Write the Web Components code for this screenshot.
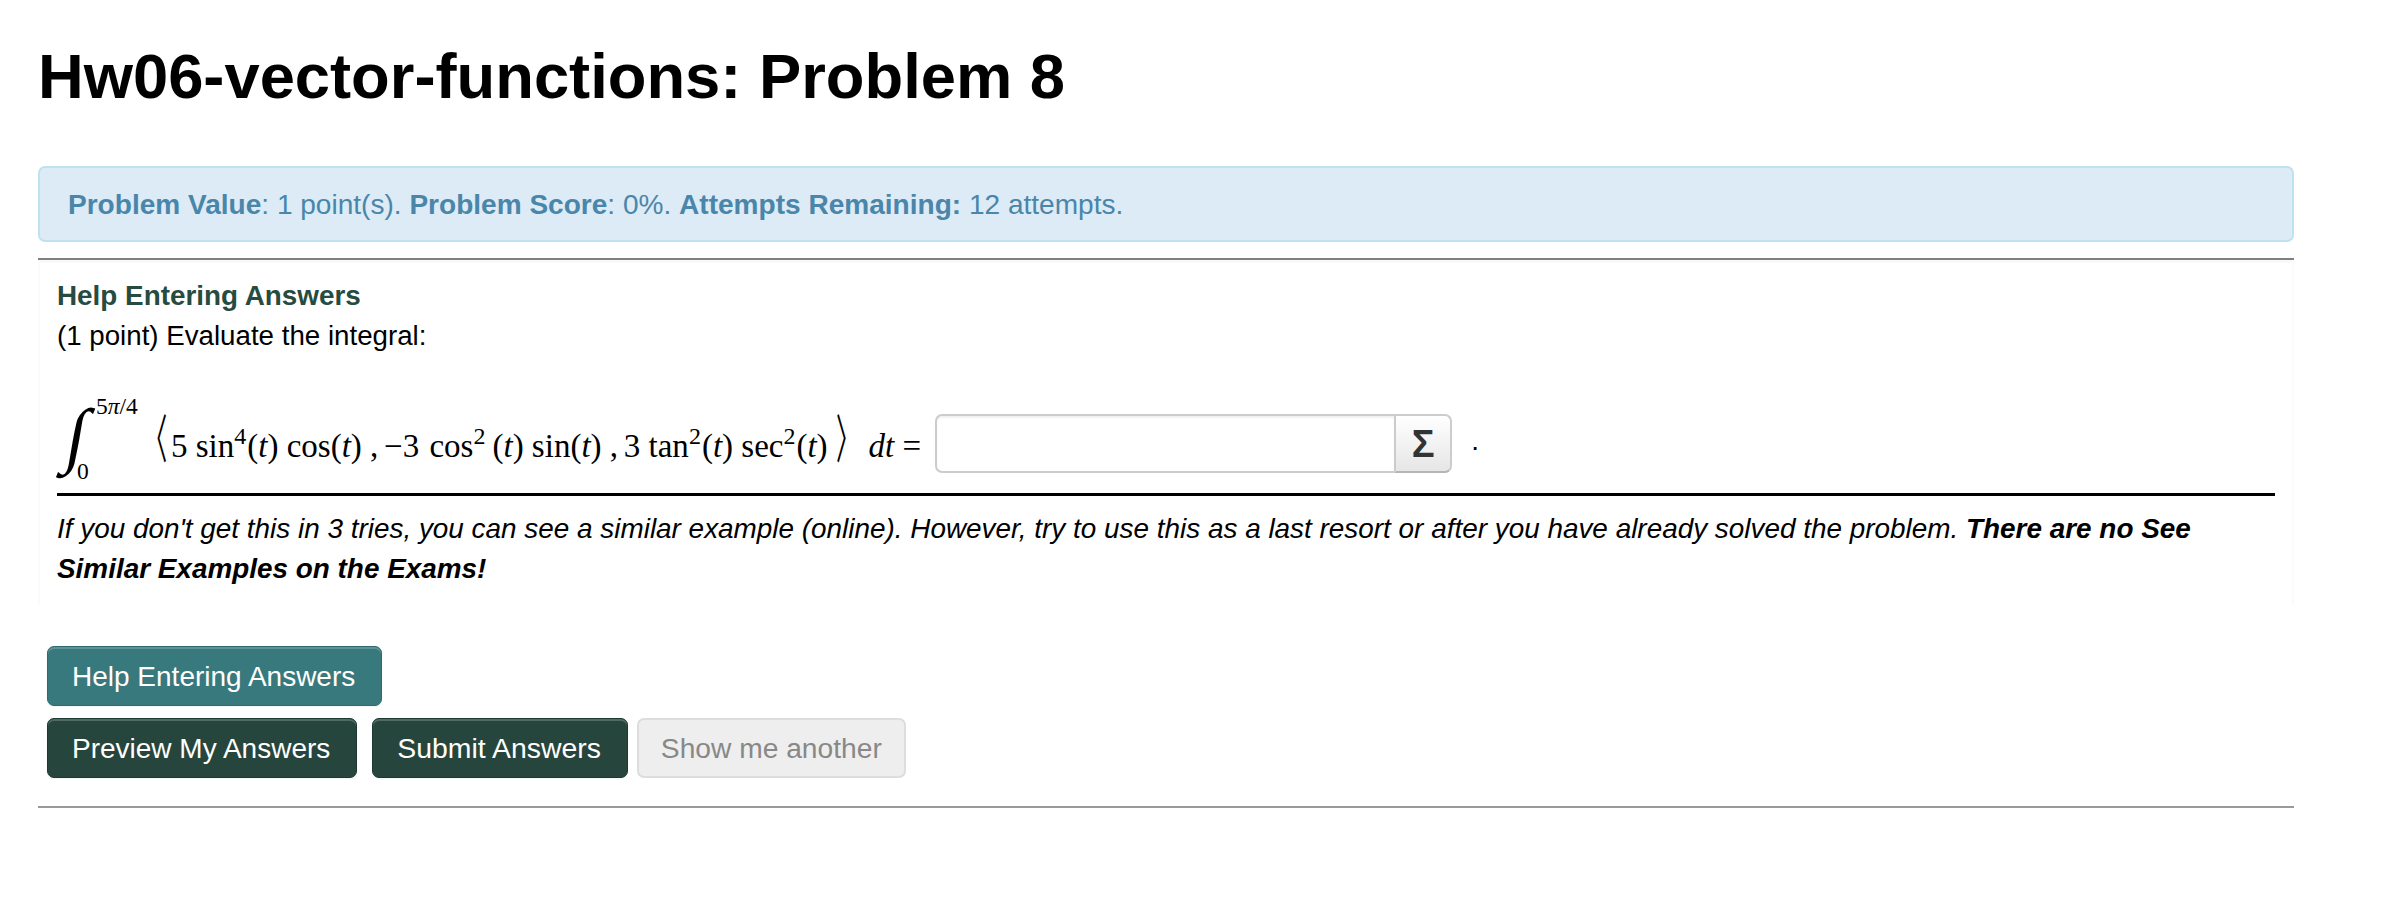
<!DOCTYPE html>
<html>
<head>
<meta charset="utf-8">
<style>
  html, body { margin: 0; background: #fff; }
  body { padding: 0 94px 0 38px; font: 28px/40px "Liberation Sans", Arial, sans-serif; color: #000; }
</style>
</head>
<body>
<hw-title>Hw06-vector-functions: Problem 8</hw-title>
<hw-alert><b>Problem Value</b>: 1 point(s). <b>Problem Score</b>: 0%. <b>Attempts Remaining:</b> 12 attempts.</hw-alert>
<hw-problem>
  <a slot="help">Help Entering Answers</a>
  <span slot="intro">(1 point) Evaluate the integral:</span>
  <math-line slot="math"></math-line>
  <span slot="note">If you don't get this in 3 tries, you can see a similar example (online). However, try to use this as a last resort or after you have already solved the problem. <b>There are no See Similar Examples on the Exams!</b></span>
</hw-problem>
<hw-actions>
  <div><hw-button kind="help">Help Entering Answers</hw-button></div>
  <div>
    <hw-button kind="dark">Preview My Answers</hw-button>
    <hw-button kind="dark" style="font-size:28.4px">Submit Answers</hw-button>
    <hw-button kind="off">Show me another</hw-button>
  </div>
</hw-actions>

<script>
class HwTitle extends HTMLElement {
    constructor(){
        super();
        this.attachShadow({mode: 'open'});
        this.shadowRoot.innerHTML = `
        <style>
            :host { display: block; padding-top: 36px; height: 130px; }
            h1 { margin: 0; font: bold 63.3px/80px "Liberation Sans", Arial, sans-serif; color: #000; }
        </style>
        <h1><slot></slot></h1>`;
    }
}

class HwAlert extends HTMLElement {
    constructor(){
        super();
        this.attachShadow({mode: 'open'});
        this.shadowRoot.innerHTML = `
        <style>
            :host {
                display: block;
                box-sizing: border-box;
                height: 76px;
                padding: 17px 28px 15px;
                background: #dcebf6;
                border: 2px solid #bfe3ee;
                border-radius: 7px;
                color: #4a86a9;
                font-size: 28.05px;
                line-height: 40px;
            }
        </style>
        <slot></slot>`;
    }
}

class HwProblem extends HTMLElement {
    constructor(){
        super();
        this.attachShadow({mode: 'open'});
        this.shadowRoot.innerHTML = `
        <style>
            :host {
                display: block;
                margin-top: 16px;
                border-top: 2px solid #808080;
            }
            .box {
                box-sizing: border-box;
                height: 345px;
                padding: 16px 19px 0;
                background: #fff;
                box-shadow: inset 2px 0 0 #fbfbfb, inset -2px 0 0 #fbfbfb, inset 0 3px 0 #f9f9f9;
            }
            ::slotted([slot=help]) { display: block; font-weight: bold; font-size: 27.85px; color: #274b3f; }
            ::slotted([slot=intro]) { display: block; font-size: 27.7px; }
            ::slotted([slot=math]) { display: block; }
            ::slotted([slot=note]) { display: block; font-style: italic; font-size: 27.9px; margin-top: 13px; }
        </style>
        <div class="box">
            <slot name="help"></slot>
            <slot name="intro"></slot>
            <slot name="math"></slot>
            <slot name="note"></slot>
        </div>`;
    }
}

class MathLine extends HTMLElement {
    constructor(){
        super();
        this.attachShadow({mode: 'open'});
        this.shadowRoot.innerHTML = `
        <style>
            :host {
                display: block;
                box-sizing: border-box;
                height: 140px;
                border-bottom: 3px solid #000;
            }
            .row {
                display: flex;
                align-items: flex-start;
                height: 137px;
                font-family: "Liberation Serif", "Times New Roman", serif;
                color: #000;
            }
            .lim {
                display: grid;
                grid-template-columns: 39px 59px;
                grid-template-rows: 72px 60px;
                font-size: 23.5px;
                line-height: 24px;
            }
            .int {
                grid-area: 1 / 1 / 3 / 2;
                font-size: 72px;
                line-height: 90px;
                margin: 34px 0 0 1px;
                transform: skewX(-10deg);
                transform-origin: left bottom;
            }
            .up { grid-area: 1 / 2; padding-top: 38px; }
            .lo { grid-area: 2 / 1; padding: 31px 0 0 20px; }
            .exp {
                display: flex;
                align-items: baseline;
                margin-top: 59px;
                font-size: 33px;
                line-height: 40px;
                white-space: pre;
            }
            sup { font-size: 24px; line-height: 0; position: relative; top: -13px; vertical-align: baseline; margin-right: 1px; }
            sup.w { margin-right: 7px; }
            i { font-style: italic; }
            .c { word-spacing: -2.5px; }
            .m { margin-left: 2px; }
            .br { font-family: "Noto Sans CJK SC", "DejaVu Serif", serif; font-size: 52px; line-height: 40px; }
            .open { margin-left: -26px; width: 42px; transform: translateY(1px) scaleX(.45); transform-origin: 27px 50%; }
            .close { margin-left: 8px; width: 25px; transform: translateY(1px) scaleX(.45); transform-origin: 0 50%; }
            .eq { margin-left: 8px; }
        </style>
        <div class="row">
            <div class="lim">
                <span class="int">∫</span>
                <span class="up">5<i>π</i>/4</span>
                <span class="lo">0</span>
            </div>
            <div class="exp"><span class="br open">〈</span><span>5 sin<sup>4</sup>(<i>t</i>) cos(<i>t</i>) <span class="c">, </span>−3<span class="m"> </span>cos<sup class="w">2</sup>(<i>t</i>) sin(<i>t</i>) <span class="c">, </span>3 tan<sup>2</sup>(<i>t</i>) sec<sup>2</sup>(<i>t</i>)</span><span class="br close">〉</span><span class="eq"><i>dt</i> =</span></div>
            <answer-box></answer-box>
        </div>`;
    }
}

class AnswerBox extends HTMLElement {
    constructor(){
        super();
        this.attachShadow({mode: 'open'});
        this.shadowRoot.innerHTML = `
        <style>
            :host { display: flex; align-items: flex-start; margin: 58px 0 0 14px; font-family: "Liberation Sans", Arial, sans-serif; }
            .field {
                box-sizing: border-box;
                width: 459px;
                height: 59px;
                background: #fff;
                border: 2px solid #ccc;
                border-right: 0;
                border-radius: 7px 0 0 7px;
                box-shadow: inset 0 2px 2px rgba(0,0,0,.06);
            }
            .sig {
                box-sizing: border-box;
                width: 58px;
                height: 59px;
                display: flex;
                align-items: center;
                justify-content: center;
                border: 2px solid #ccc;
                border-bottom-color: #b5b5b5;
                border-radius: 0 7px 7px 0;
                background: linear-gradient(#fff, #e6e6e6);
                color: #333;
                font-size: 38px;
                font-weight: bold;
            }
            .dot { margin: 7px 0 0 19px; font: 28px/40px "Liberation Sans", Arial, sans-serif; }
        </style>
        <div class="field"></div>
        <div class="sig">Σ</div>
        <span class="dot">.</span>`;
    }
}

class HwActions extends HTMLElement {
    constructor(){
        super();
        this.attachShadow({mode: 'open'});
        this.shadowRoot.innerHTML = `
        <style>
            :host {
                display: block;
                box-sizing: border-box;
                height: 203px;
                padding: 41px 9px 0;
                border-bottom: 2px solid #999;
            }
            ::slotted(div) { display: flex; gap: 15px; height: 72px; }
        </style>
        <slot></slot>`;
    }
}

class HwButton extends HTMLElement {
    constructor(){
        super();
        this.attachShadow({mode: 'open'});
        this.shadowRoot.innerHTML = `
        <style>
            :host {
                display: block;
                box-sizing: border-box;
                height: 60px;
                padding: 0 26px 0 24px;
                font-size: 28px;
                line-height: 59px;
                border-radius: 7px;
                border: 1px solid;
                white-space: nowrap;
                box-shadow: inset 0 2px 0 rgba(255,255,255,.2), 0 1px 2px rgba(0,0,0,.05);
            }
            :host([kind=help]) { background: #38797e; color: #fff; border-color: #2f6a6f; }
            :host([kind=dark]) { background: #26453d; color: #fff; border-color: #1d3a32; }
            :host([kind=off]) {
                background: #eee;
                color: #888;
                border: 2px solid #ddd;
                line-height: 57px;
                box-shadow: none;
                margin-left: -6px;
                padding: 0 22px;
                font-size: 28.2px;
            }
        </style>
        <slot></slot>`;
    }
}

customElements.define('hw-title', HwTitle);
customElements.define('hw-alert', HwAlert);
customElements.define('hw-problem', HwProblem);
customElements.define('math-line', MathLine);
customElements.define('answer-box', AnswerBox);
customElements.define('hw-actions', HwActions);
customElements.define('hw-button', HwButton);
</script>
</body>
</html>
